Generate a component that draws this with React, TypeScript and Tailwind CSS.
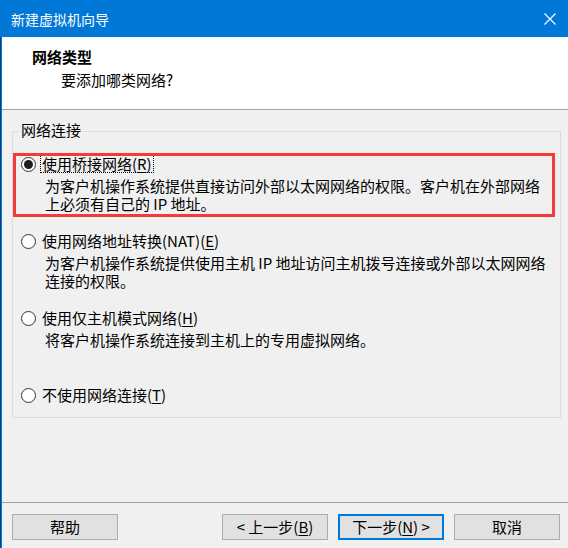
import type { ReactNode } from 'react'

interface OptionProps {
  label: ReactNode
  desc?: string[]
  checked?: boolean
  last?: boolean
}

function Radio({ checked }: { checked?: boolean }) {
  return (
    <span className="w-[15px] h-[15px] rounded-full border border-[#333333] bg-white flex items-center justify-center shrink-0">
      {checked && <span className="w-[9px] h-[9px] rounded-full bg-[#1f1f1f]" />}
    </span>
  )
}

function Key({ k }: { k: string }) {
  return <span className="underline underline-offset-2">{k}</span>
}

function Option({ label, desc = [], checked, last }: OptionProps) {
  return (
    <div className={last ? '' : 'h-[77px]'}>
      <div className="flex items-center h-[18px] pl-[8px]">
        <Radio checked={checked} />
        <span
          className={
            'ml-[4px] px-[1px] leading-[16px] border border-dotted ' +
            (checked ? 'border-black' : 'border-transparent')
          }
        >
          {label}
        </span>
      </div>
      {desc.length > 0 && (
        <div className="mt-[4px] pl-[32px] leading-[18px]">
          {desc.map((d) => (
            <div key={d} className="whitespace-nowrap">
              {d}
            </div>
          ))}
        </div>
      )}
    </div>
  )
}

function Btn({ children, primary }: { children: ReactNode; primary?: boolean }) {
  return (
    <button
      className={
        'w-[106px] h-[26px] bg-[#e1e1e1] flex items-center justify-center text-[15px] text-black ' +
        (primary ? 'border-2 border-[#0078d7]' : 'border border-[#adadad]')
      }
    >
      {children}
    </button>
  )
}

export default function App() {
  return (
    <div
      className="w-[568px] h-[548px] flex flex-col bg-[#f0f0f0] overflow-hidden text-black"
      style={{ fontFamily: '"Noto Sans CJK SC", "Noto Sans", sans-serif' }}
    >
      {/* title bar */}
      <div className="h-[37px] shrink-0 bg-[#0078d7] flex items-center justify-between pl-[11px] pr-[12px] pt-[2px] text-white text-[14px]">
        <span>新建虚拟机向导</span>
        <svg width="12" height="12" viewBox="0 0 12 12" className="-mt-[2px]">
          <path d="M0.5 0.5 L11.5 11.5 M11.5 0.5 L0.5 11.5" stroke="white" strokeWidth="1.1" fill="none" />
        </svg>
      </div>

      <div className="flex-1 flex flex-col border-l border-[#17406b]">
        <div className="flex-1 flex flex-col border-l border-[#0078d7]">
          {/* header */}
          <div className="h-[73px] shrink-0 bg-white border-b border-[#a0a0a0] pt-[10px] text-[15px]">
            <div className="pl-[30px] leading-[20px] font-bold">网络类型</div>
            <div className="pl-[59px] mt-[3px] leading-[20px]">要添加哪类网络?</div>
          </div>

          {/* body */}
          <div className="flex-1 pt-[21px] pl-[10px] pr-[7px] text-[15px]">
            <div className="relative border border-[#dcdcdc]">
              <div className="-mt-[11px] ml-[6px] px-[2px] w-fit bg-[#f0f0f0] leading-[18px]">网络连接</div>
              <div className="pt-[16px] pb-[13px]">
                <Option
                  checked
                  label={
                    <>
                      使用桥接网络(<Key k="R" />)
                    </>
                  }
                  desc={['为客户机操作系统提供直接访问外部以太网网络的权限。客户机在外部网络', '上必须有自己的 IP 地址。']}
                />
                <Option
                  label={
                    <>
                      使用网络地址转换(NAT)(<Key k="E" />)
                    </>
                  }
                  desc={['为客户机操作系统提供使用主机 IP 地址访问主机拨号连接或外部以太网网络', '连接的权限。']}
                />
                <Option
                  label={
                    <>
                      使用仅主机模式网络(<Key k="H" />)
                    </>
                  }
                  desc={['将客户机操作系统连接到主机上的专用虚拟网络。']}
                />
                <Option
                  last
                  label={
                    <>
                      不使用网络连接(<Key k="T" />)
                    </>
                  }
                />
              </div>
              {/* annotation box */}
              <div className="absolute left-0 top-[21px] w-[542px] h-[64px] border-[3px] border-[#f23c3c] pointer-events-none" />
            </div>
          </div>

          {/* footer */}
          <div className="h-[46px] shrink-0 border-t border-[#a0a0a0] pt-[11px] pl-[10px] pr-[8px] flex">
            <Btn>帮助</Btn>
            <div className="ml-auto flex gap-[10px]">
              <Btn>
                &lt; 上一步(<Key k="B" />)
              </Btn>
              <Btn primary>
                下一步(<Key k="N" />) &gt;
              </Btn>
              <Btn>取消</Btn>
            </div>
          </div>
        </div>
      </div>
    </div>
  )
}
